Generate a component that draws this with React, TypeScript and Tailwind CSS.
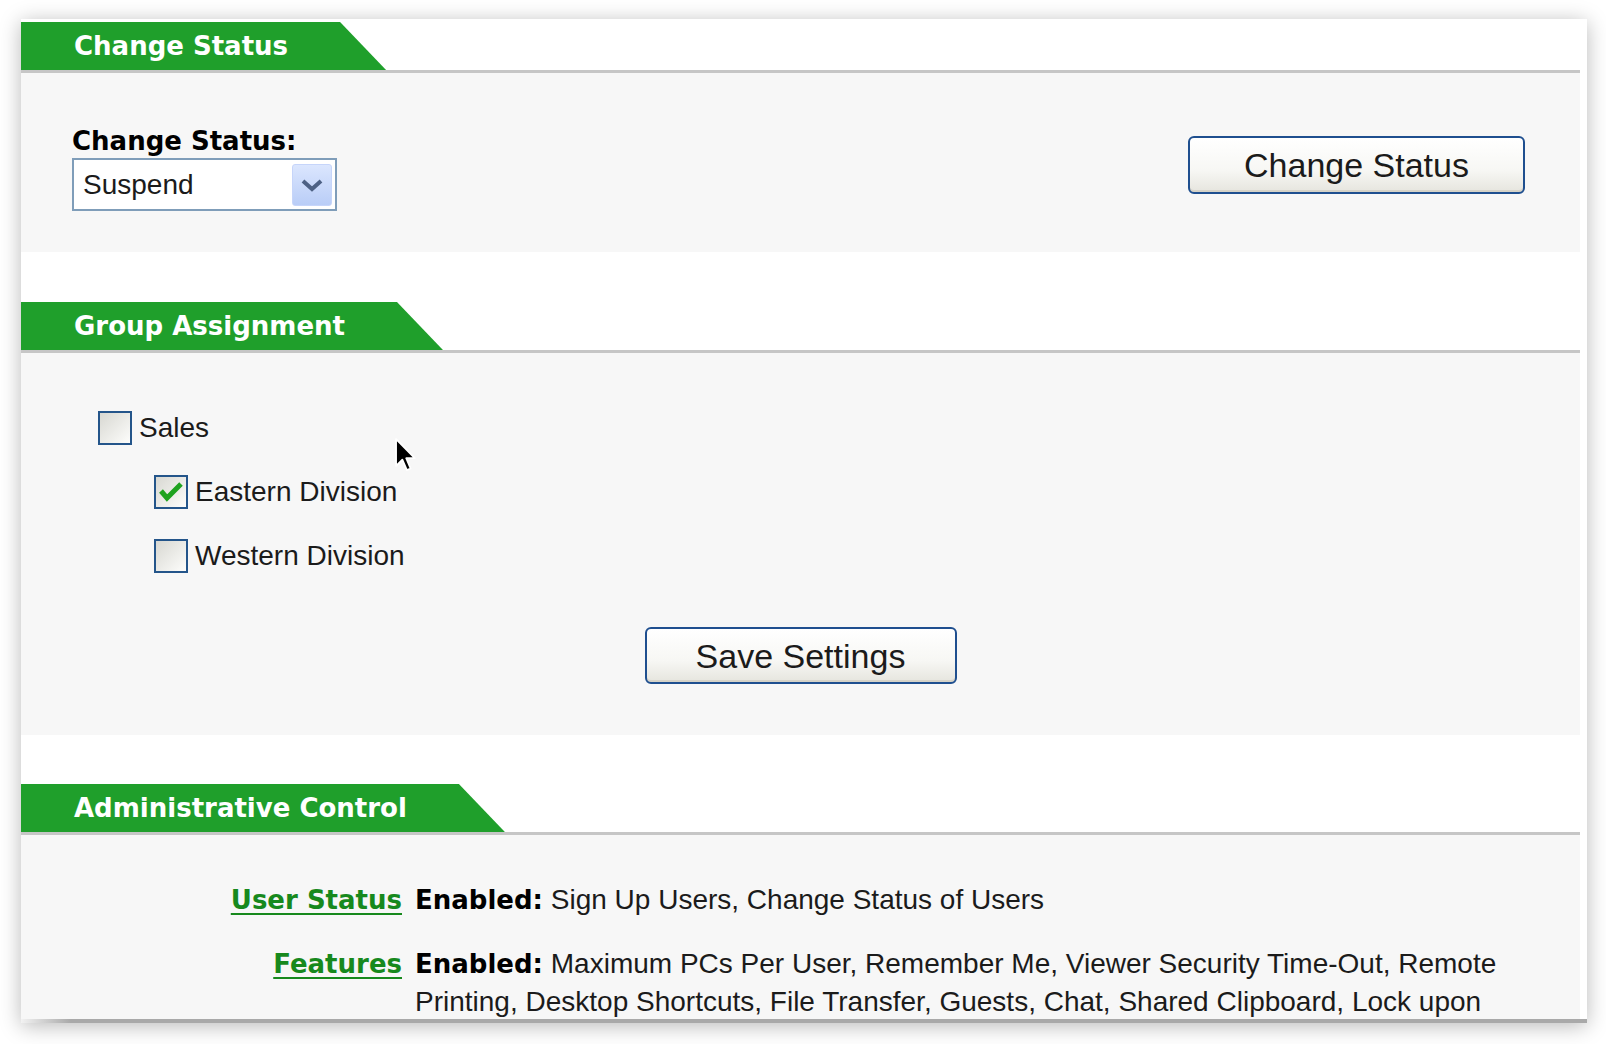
const bold = "font-['DejaVu_Sans',Verdana,sans-serif] font-bold";
const regular = "font-['Liberation_Sans',Arial,sans-serif]";

function SectionHeader({ title }: { title: string }) {
  return (
    <div className="border-b-[3px] border-[#c6c6c6]">
      <div
        className={`inline-flex h-[48px] items-center bg-[#1f9f2b] pl-[53px] pr-[98px] text-[26px] leading-[29px] text-white [clip-path:polygon(0_0,calc(100%-46px)_0,100%_100%,0_100%)] ${bold}`}
      >
        {title}
      </div>
    </div>
  );
}

function XpButton({ label, className = "" }: { label: string; className?: string }) {
  return (
    <button
      className={`rounded-[6px] border-2 border-[#1f4f8f] bg-[linear-gradient(to_bottom,#ffffff_0%,#f7f7f4_60%,#e6e5de_100%)] text-[34px] leading-none text-[#1b1b1b] shadow-[inset_0_-2px_0_#d6d3c8] ${regular} ${className}`}
    >
      {label}
    </button>
  );
}

function Checkbox({ checked, label }: { checked?: boolean; label: string }) {
  return (
    <label className="flex h-[34px] items-center gap-[7px]">
      <span className="flex h-[34px] w-[34px] items-center justify-center border-2 border-[#24558a] bg-[linear-gradient(135deg,#d8d8d2,#fdfdfb)]">
        {checked && (
          <svg width="30" height="30" viewBox="0 0 30 30">
            <path d="M5 14 L11 21 L25 7" fill="none" stroke="#1fa31f" strokeWidth="5" strokeLinejoin="miter" />
          </svg>
        )}
      </span>
      <span className={`text-[28px] text-[#1b1b1b] ${regular}`}>{label}</span>
    </label>
  );
}

function Cursor() {
  return (
    <svg
      className="absolute left-[395px] top-[438px]"
      width="21"
      height="34"
      viewBox="0 0 12 19.5"
    >
      <path
        d="M0.6 0.6 V16 L4.2 12.4 L6.8 18.4 L8.9 17.5 L6.4 11.6 H11.3 Z"
        fill="#000"
        stroke="#fff"
        strokeWidth="1"
        strokeLinejoin="round"
      />
    </svg>
  );
}

export default function App() {
  return (
    <div className="relative min-h-screen bg-white pl-[21px] pt-[19px]">
      <div className="flex h-[1004px] w-[1566px] flex-col overflow-hidden bg-white shadow-[0_3px_20px_rgba(0,0,0,0.28)]">
        <div className="flex flex-1 flex-col overflow-hidden pr-[7px] pt-[3px]">
          <SectionHeader title="Change Status" />
          <section className="flex items-start justify-between bg-[#f7f7f7] pb-[41px] pl-[51px] pr-[55px] pt-[54px]">
            <div className="flex flex-col gap-[2px]">
              <span className={`text-[26px] leading-[29px] text-black ${bold}`}>Change Status:</span>
              <div className="flex h-[53px] w-[265px] items-center justify-between border-2 border-[#7f9db9] bg-white pl-[9px] pr-[3px]">
                <span className={`text-[28px] text-[#1b1b1b] ${regular}`}>Suspend</span>
                <span className="flex h-[42px] w-[40px] items-center justify-center rounded-[3px] border border-[#c6d5fa] bg-[linear-gradient(to_bottom,#dbe6fe,#b9cdf7)]">
                  <svg width="24" height="14" viewBox="0 0 24 14">
                    <polyline points="3,3 12,11 21,3" fill="none" stroke="#4d6185" strokeWidth="4" />
                  </svg>
                </span>
              </div>
            </div>
            <XpButton label="Change Status" className="mt-[9px] h-[58px] w-[337px]" />
          </section>

          <div className="mt-[50px]">
            <SectionHeader title="Group Assignment" />
          </div>
          <section className="flex flex-col bg-[#f7f7f7] pb-[51px] pl-[77px] pt-[58px]">
            <div className="flex flex-col gap-[30px]">
              <Checkbox label="Sales" />
              <div className="ml-[56px] flex flex-col gap-[30px]">
                <Checkbox checked label="Eastern Division" />
                <Checkbox label="Western Division" />
              </div>
            </div>
            <div className="mt-[54px] flex justify-center pr-[77px]">
              <XpButton label="Save Settings" className="h-[57px] w-[312px]" />
            </div>
          </section>

          <div className="mt-[49px]">
            <SectionHeader title="Administrative Control" />
          </div>
          <section className="flex flex-1 flex-col gap-[25px] bg-[#f7f7f7] pt-[46px]">
            <div className="flex items-baseline">
              <div className="w-[381px] text-right">
                <a className={`text-[26px] text-[#17891d] underline decoration-2 underline-offset-[4px] ${bold}`}>
                  User Status
                </a>
              </div>
              <p className={`ml-[13px] w-[1110px] text-[28px] leading-[38px] text-[#1b1b1b] ${regular}`}>
                <span className={`text-[26px] text-black ${bold}`}>Enabled:</span> Sign Up Users, Change Status of Users
              </p>
            </div>
            <div className="flex items-baseline">
              <div className="w-[381px] text-right">
                <a className={`text-[26px] text-[#17891d] underline decoration-2 underline-offset-[4px] ${bold}`}>
                  Features
                </a>
              </div>
              <p className={`ml-[13px] w-[1110px] text-[28px] leading-[38px] text-[#1b1b1b] ${regular}`}>
                <span className={`text-[26px] text-black ${bold}`}>Enabled:</span> Maximum PCs Per User, Remember Me,
                Viewer Security Time-Out, Remote Printing, Desktop Shortcuts, File Transfer, Guests, Chat, Shared
                Clipboard, Lock upon
              </p>
            </div>
          </section>
        </div>
        <div className="h-[4px] bg-[linear-gradient(to_right,#f2f2f2_0px,#a9a9a9_50px,#a9a9a9_100%)]" />
      </div>
      <Cursor />
    </div>
  );
}
